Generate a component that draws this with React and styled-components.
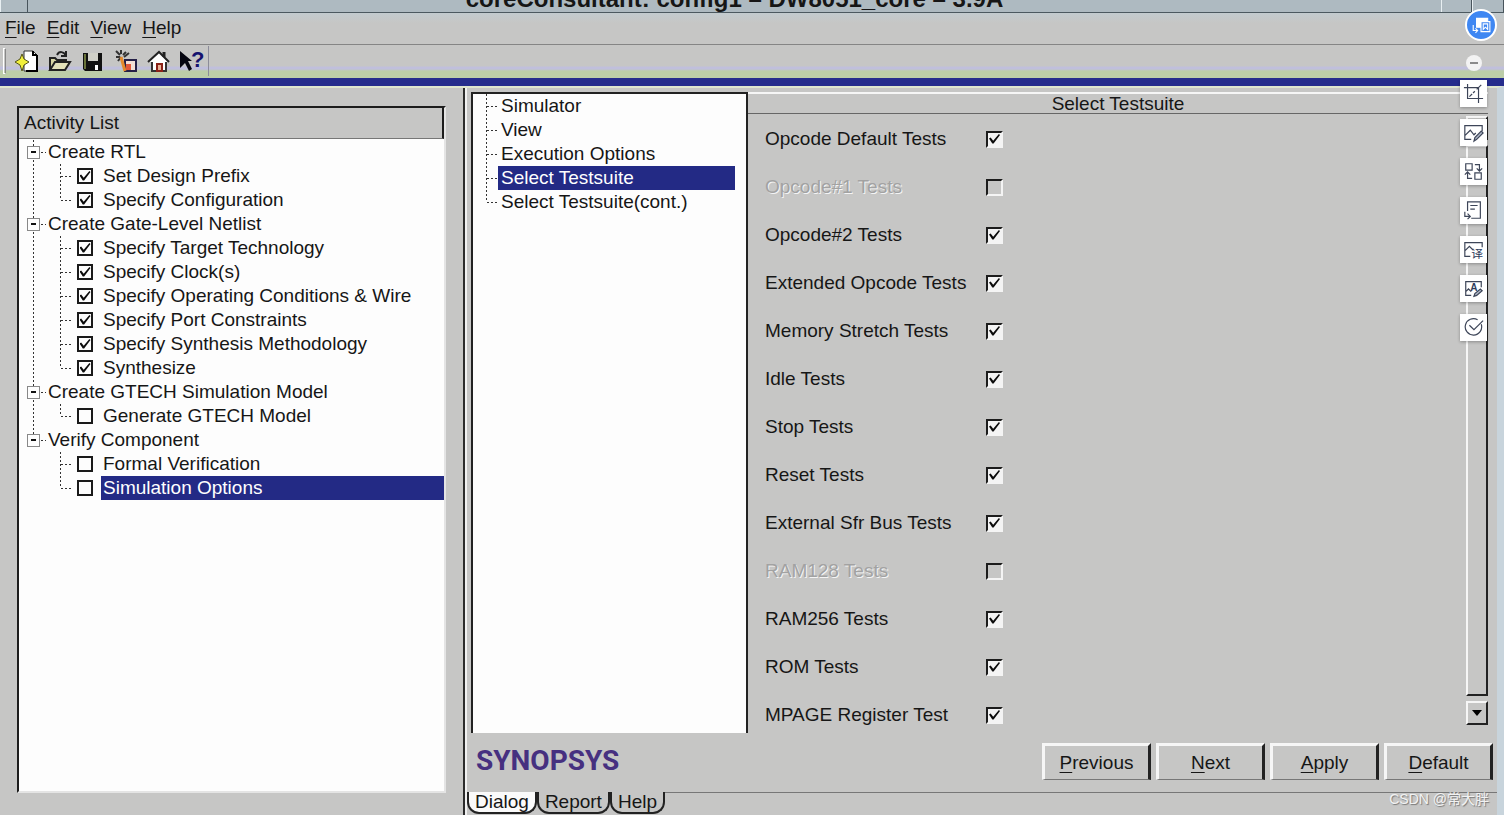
import React, { useState } from 'react';
import styled, { createGlobalStyle, css } from 'styled-components';

const activities = [
  {
    title: 'Create RTL',
    steps: [
      { name: 'Set Design Prefix', done: true },
      { name: 'Specify Configuration', done: true },
    ],
  },
  {
    title: 'Create Gate-Level Netlist',
    steps: [
      { name: 'Specify Target Technology', done: true },
      { name: 'Specify Clock(s)', done: true },
      { name: 'Specify Operating Conditions & Wire', done: true },
      { name: 'Specify Port Constraints', done: true },
      { name: 'Specify Synthesis Methodology', done: true },
      { name: 'Synthesize', done: true },
    ],
  },
  {
    title: 'Create GTECH Simulation Model',
    steps: [{ name: 'Generate GTECH Model', done: false }],
  },
  {
    title: 'Verify Component',
    steps: [
      { name: 'Formal Verification', done: false },
      { name: 'Simulation Options', done: false, selected: true },
    ],
  },
];

const pages = ['Simulator', 'View', 'Execution Options', 'Select Testsuite', 'Select Testsuite(cont.)'];

const tests = [
  { name: 'Opcode Default Tests', on: true },
  { name: 'Opcode#1 Tests', disabled: true },
  { name: 'Opcode#2 Tests', on: true },
  { name: 'Extended Opcode Tests', on: true },
  { name: 'Memory Stretch Tests', on: true },
  { name: 'Idle Tests', on: true },
  { name: 'Stop Tests', on: true },
  { name: 'Reset Tests', on: true },
  { name: 'External Sfr Bus Tests', on: true },
  { name: 'RAM128 Tests', disabled: true },
  { name: 'RAM256 Tests', on: true },
  { name: 'ROM Tests', on: true },
  { name: 'MPAGE Register Test', on: true },
];

const menus = ['File', 'Edit', 'View', 'Help'];
const actions = ['Previous', 'Next', 'Apply', 'Default'];
const tabs = ['Dialog', 'Report', 'Help'];

const toolbarIcons = [
  {
    label: 'New',
    art: (
      <>
        <path d="M9 2h9l4 4v16H9z" fill="#fff" stroke="#333" strokeWidth="1" />
        <path d="M18 2v4h4M22 6v16H11" fill="none" stroke="#000" strokeWidth="2" />
        <path d="M7 5l2 5 5 3-5 3-2 6-2-6-5-3 5-3z" fill="#f2f03c" stroke="#55551c" strokeWidth="1" />
      </>
    ),
  },
  {
    label: 'Open',
    art: (
      <>
        <path d="M2 21V9h5l2 2h9v3" fill="#d8d6a4" stroke="#222" strokeWidth="2" />
        <path d="M2 21l5-8h15l-5 8z" fill="#e4e2ba" stroke="#222" strokeWidth="2" />
        <path d="M9 6c2-4 7-4 9 1M18 2v5h-5" fill="none" stroke="#222" strokeWidth="2" />
      </>
    ),
  },
  {
    label: 'Save',
    art: (
      <>
        <path d="M2 4h19v18H4l-2-2z" fill="#111" />
        <path d="M7 4h10v8H7z" fill="#d0d0c8" />
        <path d="M4 5v15" stroke="#69733a" strokeWidth="2" />
        <path d="M14 16h3v5h-3z" fill="#fff" />
      </>
    ),
  },
  {
    label: 'Build',
    art: (
      <>
        <path d="M2 2l4 4M7 1v4M12 3L9 6M2 8h4M10 8l5-4M4 12l3-4" stroke="#333" strokeWidth="2" />
        <path d="M11 11h11v11H11z" fill="#f4dfd5" stroke="#252047" strokeWidth="2" />
        <path d="M7 8l4 14" stroke="#e58a2c" strokeWidth="3" />
        <path d="M12 15h5v6h-5z" fill="#e2583a" />
      </>
    ),
  },
  {
    label: 'Home',
    art: (
      <>
        <path d="M5 11h14v11H5z" fill="#fff" stroke="#333" strokeWidth="2" />
        <path d="M1 13L12 3l10 10" fill="#fff" stroke="#222" strokeWidth="2" />
        <path d="M17 3v5" stroke="#222" strokeWidth="3" />
        <path d="M10 22v-7h5v7z" fill="#e9b499" stroke="#8b2218" strokeWidth="2" />
      </>
    ),
  },
  {
    label: 'Context help',
    art: (
      <>
        <path d="M0 2l12 10H8l4 8-3 2-4-8-5 5z" fill="#050510" />
        <text x="11" y="18" fontFamily="Liberation Sans, Arial, sans-serif" fontWeight="700" fontSize="22" fill="#15126e">
          ?
        </text>
      </>
    ),
  },
];

const captureTools = [
  { label: 'Crop', art: <path d="M5 1v16h17M1 5h16v17M7 15l3-3M11 11l2-2M15 7l5-5" /> },
  {
    label: 'Edit image',
    art: (
      <>
        <path d="M9 19H2V4h19v6M2 15l6-6 4 5 2-2" />
        <path d="M12 21l1-4 7-7 2 2-7 7z" fill="#aeb6c6" />
      </>
    ),
  },
  {
    label: 'Convert',
    art: <path d="M3 3h7v7H3zM13 13h7v7h-7zM13 4h5v6M15 8l3 3 3-3M10 19H5v-6M2 15l3-3 3 3" />,
  },
  { label: 'Extract text', art: <path d="M5 12V2h14v18H9M8 6h8M8 10h5M2 13v5h6M5 15l3 3-3 3" /> },
  {
    label: 'Translate image',
    art: (
      <>
        <path d="M8 19H2V4h19v5M2 13l5-5 4 4" />
        <text x="9" y="21" fontFamily="Noto Sans CJK SC, sans-serif" fontSize="13" fill="#2f3d5c" stroke="none">
          译
        </text>
      </>
    ),
  },
  {
    label: 'Edit text',
    art: (
      <>
        <path d="M9 19H3V4h17v6M3 15l3-3 3 3" />
        <text x="8" y="14" fontFamily="Liberation Sans, Arial, sans-serif" fontWeight="700" fontSize="11" fill="#2f3d5c" stroke="none">
          A
        </text>
        <path d="M12 20l1-3 6-5 2 2-6 5z" fill="#aeb6c6" />
      </>
    ),
  },
  { label: 'Finish', art: <path d="M20 8a9 9 0 1 1-4-5M7 9l5 5L22 4" /> },
];

const App = () => {
  const [page, setPage] = useState('Select Testsuite');

  return (
    <Window>
      <GlobalStyle />
      <TitleBar>
        <TitleButton $width="28px" />
        <Title>coreConsultant: config1 – DW8051_core – 3.9A</Title>
        <TitleButton $width="31px" />
        <TitleButton $width="32px" />
      </TitleBar>
      <MenuBar>
        {menus.map((name) => (
          <MenuItem key={name}>
            <u>{name[0]}</u>
            {name.slice(1)}
          </MenuItem>
        ))}
      </MenuBar>
      <ToolBar>
        <Grip />
        {toolbarIcons.map(({ label, art }) => (
          <ToolButton key={label} aria-label={label}>
            <svg width="24" height="24" viewBox="0 0 24 24">
              {art}
            </svg>
          </ToolButton>
        ))}
        <ToolEnd />
      </ToolBar>
      <Body>
        <Sidebar>
          <ActivityBox>
            <ActivityHeader>Activity List</ActivityHeader>
            {activities.map((group, i) => (
              <React.Fragment key={group.title}>
                <TreeRow>
                  <Guide $line={i === activities.length - 1 ? 'top' : 'full'} $node>
                    <Expander aria-label={'Collapse ' + group.title} />
                  </Guide>
                  <GroupName>{group.title}</GroupName>
                </TreeRow>
                {group.steps.map((step, j) => (
                  <TreeRow key={step.name}>
                    <Guide $line={i === activities.length - 1 ? 'none' : 'full'} />
                    <Branch $last={j === group.steps.length - 1} />
                    <StepCheck type="checkbox" id={'step-' + i + '-' + j} defaultChecked={step.done} />
                    <StepName htmlFor={'step-' + i + '-' + j} $selected={step.selected}>
                      {step.name}
                    </StepName>
                  </TreeRow>
                ))}
              </React.Fragment>
            ))}
          </ActivityBox>
        </Sidebar>
        <Main>
          <Workspace>
            <PageList>
              {pages.map((name, i) => (
                <TreeRow key={name}>
                  <Branch $last={i === pages.length - 1} />
                  <PageButton $selected={name === page} onClick={() => setPage(name)}>
                    {name}
                  </PageButton>
                </TreeRow>
              ))}
            </PageList>
            <TestPanel>
              <PanelTitle>Select Testsuite</PanelTitle>
              <PanelBody>
                <TestList>
                  {tests.map(({ name, on, disabled }) => (
                    <TestRow key={name} $disabled={disabled}>
                      <span>{name}</span>
                      <TestCheck type="checkbox" defaultChecked={on} disabled={disabled} />
                    </TestRow>
                  ))}
                </TestList>
                <ScrollBar>
                  <ScrollButton aria-label="Scroll up">
                    <svg width="10" height="6">
                      <path d="M0 6h10L5 0z" />
                    </svg>
                  </ScrollButton>
                  <ScrollThumb />
                  <ScrollButton aria-label="Scroll down">
                    <svg width="10" height="6">
                      <path d="M0 0h10L5 6z" />
                    </svg>
                  </ScrollButton>
                </ScrollBar>
              </PanelBody>
            </TestPanel>
          </Workspace>
          <Footer>
            <Logo>SYNOPSYS</Logo>
            <Actions>
              {actions.map((name) => (
                <ActionButton key={name}>
                  <u>{name[0]}</u>
                  {name.slice(1)}
                </ActionButton>
              ))}
            </Actions>
          </Footer>
          <TabBar>
            {tabs.map((name, i) => (
              <Tab key={name} $active={i === 0}>
                {name}
              </Tab>
            ))}
            <TabFill>
              <Watermark>CSDN @常大胖</Watermark>
            </TabFill>
          </TabBar>
        </Main>
      </Body>
      <CaptureBar>
        <ConvertButton aria-label="Convert to document">
          <svg width="20" height="20" viewBox="0 0 18 18" fill="none" stroke="#fff" strokeWidth="1">
            <path d="M5 3h10v3H9v5H5z" fill="#fff" />
            <path d="M9 6h8v9H9z" fill="#3f87f2" />
            <path d="M11 8v5l2-2 2 2V8z" />
            <path d="M2 9v5h4M4 12l2 2-2 2" />
          </svg>
        </ConvertButton>
        <HideButton aria-label="Hide tools">
          <i />
        </HideButton>
        <CaptureTools>
          {captureTools.map(({ label, art }) => (
            <CaptureButton key={label} aria-label={label}>
              <svg width="21" height="21" viewBox="0 0 23 23" fill="none" stroke="#3d4558" strokeWidth="1.3">
                {art}
              </svg>
            </CaptureButton>
          ))}
        </CaptureTools>
      </CaptureBar>
    </Window>
  );
};

const GlobalStyle = createGlobalStyle`
  * {
    box-sizing: border-box;
  }
  body {
    margin: 0;
    background: #c6c6c5;
    color: #161616;
    font: 19px/24px "Liberation Sans", Arial, "Noto Sans CJK SC", sans-serif;
  }
  button {
    padding: 0;
    border: 0;
    background: none;
    color: inherit;
    font: inherit;
  }
  u {
    text-underline-offset: 3px;
  }
`;

const Window = styled.div`
  position: relative;
  display: flex;
  flex-direction: column;
  min-height: 100vh;
`;

const TitleBar = styled.header`
  display: flex;
  height: 13px;
  overflow: hidden;
  background: #aebac1;
  border-bottom: 1px solid #4c5960;
`;

const TitleButton = styled.span`
  flex: 0 0 ${({ $width }) => $width};
  border-right: 1px solid #48545c;
  box-shadow: inset 1px 0 #e8eff2;
`;

const Title = styled.h1`
  flex: 1;
  align-self: flex-end;
  margin: 0;
  padding-bottom: 1px;
  font-size: 24px;
  line-height: 24px;
  text-align: center;
  white-space: nowrap;
`;

const MenuBar = styled.nav`
  display: flex;
  align-items: center;
  gap: 11px;
  height: 32px;
  padding: 0 5px 2px;
  background: linear-gradient(#c3cbcf, #c6c6c5 10px);
  border-bottom: 1px solid #858585;
`;

const MenuItem = styled.button`
  line-height: 28px;
`;

const ToolBar = styled.div`
  display: flex;
  align-items: center;
  height: 41px;
  padding-bottom: 10px;
  background: linear-gradient(#c6c6c5 0 21px, #c0bfdc 22px 24px, #bccda8 26px 33px, #252c8c 33px);
`;

const Grip = styled.span`
  width: 3px;
  height: 26px;
  margin: 0 4px 0 3px;
  border: 1px solid #fff;
  border-right-color: #888;
`;

const ToolButton = styled.button`
  display: flex;
  align-items: center;
  justify-content: center;
  width: 33px;
  height: 30px;
`;

const ToolEnd = styled.span`
  height: 30px;
  border-right: 1px solid #8c8c9a;
`;

const Body = styled.div`
  flex: 1;
  display: flex;
  border-top: 2px solid #dfe6cf;
  border-right: 7px solid #c8d4dc;
`;

const Sidebar = styled.aside`
  flex: 0 0 465px;
  display: flex;
  padding: 18px 17px 22px;
  border-right: 2px solid #2b2b2b;
`;

const ActivityBox = styled.section`
  flex: 1;
  min-width: 0;
  background: #fdfdfd;
  border: 2px solid #1c1c1c;
  border-right-color: #e4e4e4;
  border-bottom-color: #e4e4e4;
`;

const ActivityHeader = styled.h2`
  margin: 0 0 1px;
  padding: 3px 5px;
  background: #c6c6c5;
  border-right: 2px solid #1c1c1c;
  border-bottom: 1px solid #777;
  font-size: 19px;
  font-weight: 400;
`;

const TreeRow = styled.div`
  display: flex;
  align-items: center;
  height: 24px;
`;

const dots = (dir) => `repeating-linear-gradient(${dir}, #333 0 2px, transparent 2px 4px) no-repeat`;

const lineHeights = { full: '24px', top: '12px', none: '0' };

/* column of the outermost tree line, 28px wide with the line under the expander */
const Guide = styled.span`
  display: flex;
  align-items: center;
  flex: 0 0 28px;
  height: 24px;
  padding-left: 8px;
  background: ${({ $line }) => css`
    ${dots('to bottom')} 14px 0 / 1px ${lineHeights[$line]}
  `}${({ $node }) => $node && `, ${dots('to right')} 22px 12px / 5px 1px`};
`;

const Expander = styled.button`
  display: flex;
  align-items: center;
  justify-content: center;
  width: 13px;
  height: 13px;
  background: #fdfdfd;
  border: 1px solid #888;

  &::before {
    content: '';
    width: 5px;
    height: 2px;
    background: #111;
  }
`;

const Branch = styled.span`
  flex: 0 0 25px;
  height: 24px;
  background: ${dots('to bottom')} 13px 0 / 1px ${({ $last }) => ($last ? '12px' : '24px')},
    ${dots('to right')} 14px 12px / 11px 1px;

  ${Guide} + & {
    flex-basis: 30px;
  }
`;

const GroupName = styled.span`
  padding-left: 1px;
  white-space: nowrap;
`;

const tick = css`
  &:checked::before {
    content: '';
    width: 11px;
    height: 10px;
    background: #0c0c0c;
    clip-path: polygon(0 45%, 15% 35%, 38% 68%, 90% 0, 100% 10%, 42% 95%, 30% 95%);
  }
`;

const StepCheck = styled.input`
  appearance: none;
  display: flex;
  align-items: center;
  justify-content: center;
  flex: 0 0 16px;
  height: 16px;
  margin: 0 8px 0 0;
  background: #fdfdfd;
  border: 2px solid #1a1a1a;
  ${tick}
`;

const StepName = styled.label`
  flex: 1;
  min-width: 0;
  padding-left: 2px;
  overflow: hidden;
  white-space: nowrap;
  color: ${({ $selected }) => ($selected ? '#fff' : 'inherit')};
  background: ${({ $selected }) => ($selected ? '#232a85' : 'transparent')};
`;

const Main = styled.main`
  flex: 1;
  display: flex;
  flex-direction: column;
  min-width: 0;
  border-left: 2px solid #f0f0f0;
`;

const Workspace = styled.div`
  flex: 1;
  display: flex;
  padding: 4px 9px 0 4px;
`;

const PageList = styled.nav`
  flex: 0 0 277px;
  padding-right: 11px;
  background: #fdfdfd;
  border: solid #222;
  border-width: 2px 2px 0;
`;

const PageButton = styled.button`
  flex: 1;
  height: 24px;
  padding-left: 3px;
  text-align: left;
  white-space: nowrap;
  color: ${({ $selected }) => ($selected ? '#fff' : 'inherit')};
  background: ${({ $selected }) => ($selected ? '#232a85' : 'transparent')};
`;

const TestPanel = styled.section`
  flex: 1;
  display: flex;
  flex-direction: column;
  min-width: 0;
  border-top: 2px solid #f6f6f6;
`;

const PanelTitle = styled.h2`
  height: 20px;
  margin: 0;
  border-bottom: 1px solid #666;
  font-size: 19px;
  font-weight: 400;
  line-height: 20px;
  text-align: center;
`;

const PanelBody = styled.div`
  flex: 1;
  display: flex;
  justify-content: space-between;
`;

const TestList = styled.div`
  display: flex;
  flex-direction: column;
  gap: 24px;
  padding: 13px 0 0 17px;
`;

const TestRow = styled.label`
  display: grid;
  grid-template-columns: 221px 17px;
  align-items: center;
  white-space: nowrap;
  color: ${({ $disabled }) => ($disabled ? '#a2a2a2' : 'inherit')};
  text-shadow: ${({ $disabled }) => ($disabled ? '1px 1px #f4f4f4' : 'none')};
`;

const TestCheck = styled.input`
  appearance: none;
  display: flex;
  align-items: center;
  justify-content: center;
  width: 17px;
  height: 17px;
  margin: 0;
  background: #f4f4f4;
  border: 2px solid #1c1c1c;
  border-right-color: #f4f4f4;
  border-bottom-color: #f4f4f4;
  ${tick}

  &:disabled {
    background: #c6c6c5;
  }
`;

const ScrollBar = styled.div`
  display: flex;
  flex-direction: column;
  gap: 5px;
  width: 22px;
  padding: 2px 0 8px;
`;

const raised = css`
  border: 2px solid #f6f6f6;
  border-right-color: #222;
  border-bottom-color: #222;
`;

const ScrollButton = styled.button`
  display: flex;
  align-items: center;
  justify-content: center;
  height: 24px;
  ${raised}
`;

const ScrollThumb = styled.div`
  flex: 1;
  ${raised}
`;

const Footer = styled.footer`
  display: flex;
  align-items: flex-start;
  justify-content: space-between;
  height: 59px;
  padding: 10px 4px 0 9px;
`;

const Logo = styled.strong`
  color: #463080;
  font-family: Roboto, 'Liberation Sans', sans-serif;
  font-size: 28px;
  line-height: 36px;
`;

const Actions = styled.div`
  display: flex;
  gap: 5px;
`;

const ActionButton = styled.button`
  width: 109px;
  height: 37px;
  border: solid #f6f6f6;
  border-width: 3px 3px 1px;
  border-right-color: #222;
  border-bottom-color: #777;
`;

const TabBar = styled.div`
  display: flex;
  height: 23px;
`;

const Tab = styled.button`
  height: 22px;
  padding: 0 6px;
  background: ${({ $active }) => ($active ? '#fafafa' : '#c6c6c5')};
  border: solid #222;
  border-width: 0 2px 2px;
  border-radius: 0 0 12px 12px;
  line-height: 20px;
`;

const TabFill = styled.div`
  flex: 1;
  display: flex;
  justify-content: flex-end;
  padding-right: 8px;
  border-top: 1px solid #777;
`;

const Watermark = styled.span`
  color: #f2f2f2;
  font-size: 14px;
  line-height: 12px;
  text-shadow: 1px 1px 1px #777;
`;

/* floats over the right edge of the window */
const CaptureBar = styled.aside`
  position: absolute;
  top: 9px;
  right: 7px;
  display: flex;
  flex-direction: column;
  align-items: flex-end;
`;

const ConvertButton = styled.button`
  display: flex;
  align-items: center;
  justify-content: center;
  width: 32px;
  height: 32px;
  background: #3f87f2;
  border: 2px solid #fff;
  border-radius: 50%;
`;

const HideButton = styled.button`
  display: flex;
  align-items: center;
  justify-content: center;
  width: 16px;
  height: 16px;
  margin: 14px 15px 9px 0;
  background: #f3f3f3;
  border-radius: 50%;

  i {
    width: 8px;
    height: 2px;
    background: #8b8b8b;
  }
`;

const CaptureTools = styled.div`
  display: flex;
  flex-direction: column;
  gap: 12px;
  margin-right: 10px;
`;

const CaptureButton = styled.button`
  display: flex;
  align-items: center;
  justify-content: center;
  width: 27px;
  height: 27px;
  background: #fff;
  box-shadow: 0 1px 3px rgba(0, 0, 0, 0.3);
`;

export default App;
